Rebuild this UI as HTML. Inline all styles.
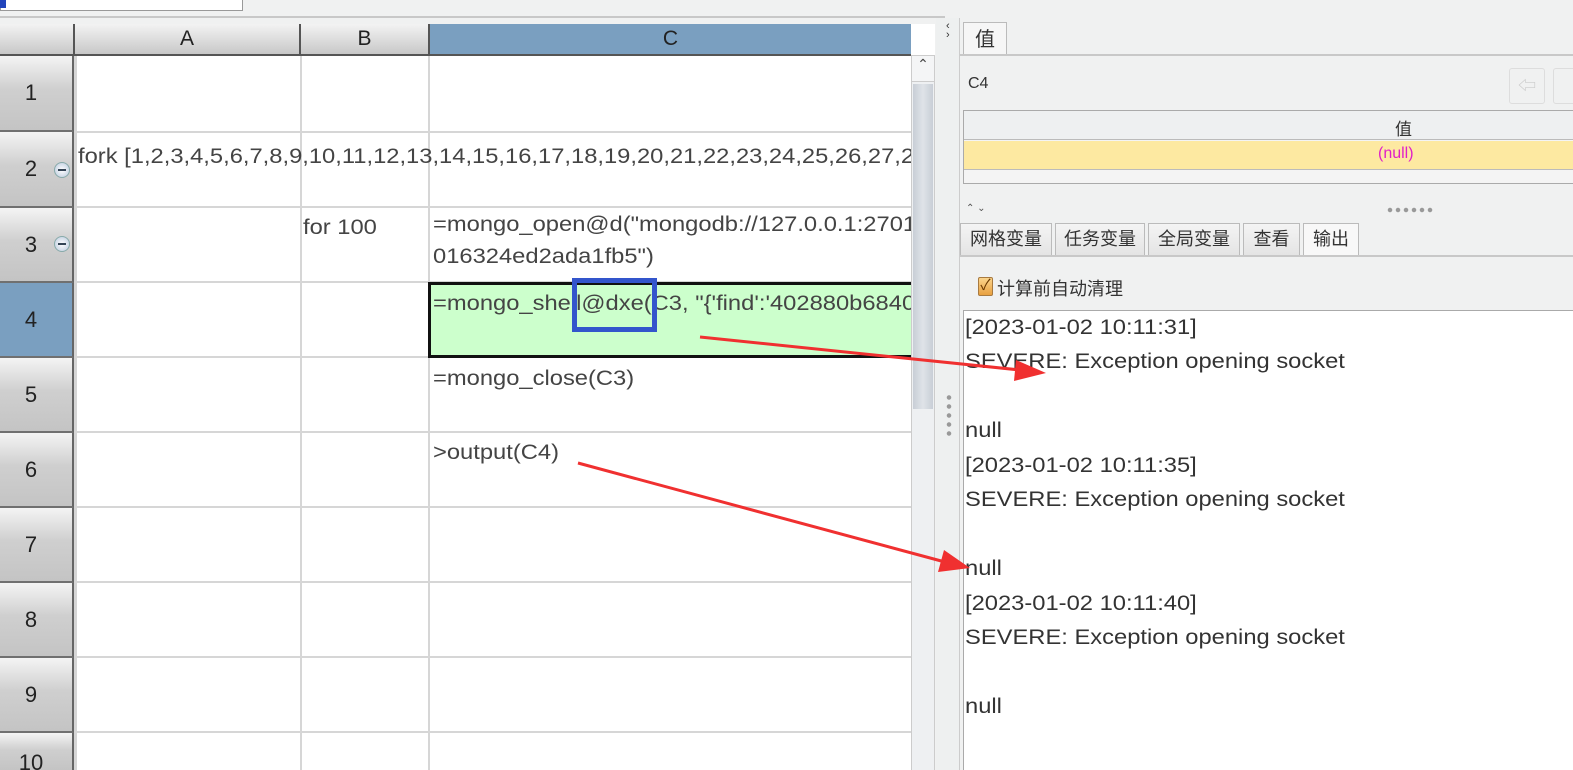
<!DOCTYPE html>
<html style="width:1573px;height:770px;overflow:hidden"><head><meta charset="utf-8"><style>
*{margin:0;padding:0;box-sizing:border-box}
body{width:1573px;height:770px;overflow:hidden;background:#f0f1f1;font-family:"Liberation Sans","Noto Sans CJK SC",sans-serif;position:relative}
.a{position:absolute}
.rh{position:absolute;left:0;width:74px;background:linear-gradient(#f4f4f4,#cfcfcf 45%,#c4c4c4);border-bottom:2px solid #707070;border-right:2px solid #666;font-size:22px;color:#222}
.rh span{position:absolute;left:0;width:62px;text-align:center;top:50%;transform:translateY(-50%)}
.ch{position:absolute;top:24px;height:32px;background:linear-gradient(#f3f3f3,#c8c8c8);border-right:2px solid #555;border-bottom:2px solid #555;font-size:21px;color:#222;text-align:center;line-height:30px}
.hl{position:absolute;left:74px;width:837px;height:2px;background:#d6d6d6}
.vl{position:absolute;top:56px;height:714px;width:2px;background:#d6d6d6}
.t{position:absolute;font-size:21px;color:#444;white-space:nowrap;transform:scaleX(1.13);transform-origin:0 0}
.clip{position:absolute;overflow:hidden}
.btn{position:absolute;left:54px;width:16px;height:16px;border-radius:50%;background:radial-gradient(#fff,#b8c8dc);border:1px solid #8aa;}
.btn:after{content:"";position:absolute;left:3px;top:6px;width:8px;height:2px;background:#345}
.out{position:absolute;left:965px;font-size:21px;color:#333;white-space:nowrap;transform:scaleX(1.13);transform-origin:0 0}
.tab{position:absolute;top:223px;height:32px;border:1px solid #bbb;border-bottom:none;background:linear-gradient(#f4f4f4,#e4e4e4);font-size:18px;color:#333;text-align:center;line-height:30px}
</style></head><body>
<div class="a" style="left:0;top:0;width:243px;height:11px;background:#fff;border:1px solid #999;border-top:none"></div>
<div class="a" style="left:0;top:0;width:6px;height:8px;background:#2244bb"></div>
<div class="a" style="left:0;top:16px;width:945px;height:2px;background:#c8c8c8"></div>
<div class="a" style="left:74px;top:56px;width:837px;height:714px;background:#fff"></div>
<div class="ch" style="left:0;width:75px"></div>
<div class="ch" style="left:75px;width:226px">A</div>
<div class="ch" style="left:301px;width:129px">B</div>
<div class="ch" style="left:430px;width:481px;background:#7a9fc0;border-right:none">C</div>
<div class="a" style="left:911px;top:24px;width:24px;height:32px;background:#fff;border-bottom:1px solid #ccc"></div>
<div class="rh" style="top:56px;height:76px"><span>1</span></div>
<div class="rh" style="top:132px;height:76px"><span>2</span></div>
<div class="rh" style="top:208px;height:75px"><span>3</span></div>
<div class="rh" style="top:283px;height:75px;background:#7a9fc0"><span>4</span></div>
<div class="rh" style="top:358px;height:75px"><span>5</span></div>
<div class="rh" style="top:433px;height:75px"><span>6</span></div>
<div class="rh" style="top:508px;height:75px"><span>7</span></div>
<div class="rh" style="top:583px;height:75px"><span>8</span></div>
<div class="rh" style="top:658px;height:75px"><span>9</span></div>
<div class="rh" style="top:733px;height:37px;border-bottom:none"><span style="top:30px">10</span></div>
<div class="btn" style="top:162px"></div>
<div class="btn" style="top:236px"></div>
<div class="hl" style="top:131px"></div><div class="hl" style="top:206px"></div><div class="hl" style="top:281px"></div>
<div class="hl" style="top:356px"></div><div class="hl" style="top:431px"></div><div class="hl" style="top:506px"></div>
<div class="hl" style="top:581px"></div><div class="hl" style="top:656px"></div><div class="hl" style="top:731px"></div>
<div class="vl" style="left:74px;width:3px"></div><div class="vl" style="left:300px"></div><div class="vl" style="left:428px"></div>
<div class="a" style="left:428px;top:282px;width:485px;height:76px;background:#ccffcc;border:3px solid #111;border-right:none"></div>
<div class="clip" style="left:78px;top:140px;width:833px;height:40px"><div class="t" style="left:0;top:5px">fork [1,2,3,4,5,6,7,8,9,10,11,12,13,14,15,16,17,18,19,20,21,22,23,24,25,26,27,28</div></div>
<div class="t" style="left:303px;top:216px">for 100</div>
<div class="clip" style="left:433px;top:210px;width:478px;height:34px"><div class="t" style="left:0;top:3px">=mongo_open@d("mongodb://127.0.0.1:27017</div></div>
<div class="t" style="left:433px;top:245px">016324ed2ada1fb5")</div>
<div class="clip" style="left:433px;top:288px;width:478px;height:34px"><div class="t" style="left:0;top:4px">=mongo_shell@dxe(C3, "{'find':'402880b6840</div></div>
<div class="t" style="left:433px;top:367px">=mongo_close(C3)</div>
<div class="t" style="left:433px;top:441px">&gt;output(C4)</div>
<div class="a" style="left:572px;top:278px;width:85px;height:54px;border:5px solid #3355cc"></div>
<div class="a" style="left:911px;top:56px;width:24px;height:714px;background:#eef0f2;border-left:1px solid #ccc;border-right:1px solid #ccc"></div>
<div class="a" style="left:912px;top:56px;width:22px;height:26px;background:#f4f5f6;border-bottom:1px solid #ccc;font-size:14px;text-align:center;color:#444">&#8963;</div>
<div class="a" style="left:913px;top:84px;width:20px;height:325px;background:linear-gradient(90deg,#c8ced6,#dfe3e8,#c8ced6)"></div>
<div class="a" style="left:936px;top:18px;width:24px;height:752px;background:#eef0f0;border-right:1px solid #ccc"></div>
<div class="a" style="left:946px;top:393px;width:6px;height:46px;background:radial-gradient(circle,#999 2px,transparent 2.5px) 0 0/6px 9px"></div>
<div class="a" style="left:946px;top:22px;font-size:11px;color:#333;line-height:9px">‹<br>›</div>
<div class="a" style="left:963px;top:22px;width:44px;height:33px;background:#f6f6f6;border:1px solid #bbb;border-bottom:none;font-size:20px;text-align:center;line-height:34px;color:#333">值</div>
<div class="a" style="left:960px;top:54px;width:613px;height:2px;background:#c8c8c8"></div>
<div class="a" style="left:968px;top:75px;font-size:16px;color:#333">C4</div>
<div class="a" style="left:1509px;top:68px;width:36px;height:36px;border:1px solid #ddd;border-radius:3px;color:#ccc;text-align:center;line-height:34px;font-size:18px">⇦</div>
<div class="a" style="left:1553px;top:68px;width:30px;height:36px;border:1px solid #ddd;border-radius:3px"></div>
<div class="a" style="left:963px;top:110px;width:620px;height:74px;border:1px solid #aaa;background:#f4f4f4"></div>
<div class="a" style="left:964px;top:111px;width:620px;height:29px;background:#eef0f1;border-bottom:1px solid #bbb;font-size:17px;color:#333"><span style="position:absolute;left:431px;top:4px">值</span></div>
<div class="a" style="left:964px;top:141px;width:620px;height:29px;background:#fde9a1;border-bottom:1px solid #bbb;font-size:16px;color:#e020c8"><span style="position:absolute;left:414px;top:4px">(null)</span></div>
<div class="a" style="left:966px;top:203px;font-size:10px;color:#555">⌃ ⌄</div>
<div class="a" style="left:1386px;top:207px;width:48px;height:6px;background:radial-gradient(circle,#999 2px,transparent 2.5px) 0 0/8px 6px"></div>
<div class="tab" style="left:960px;width:92px">网格变量</div>
<div class="tab" style="left:1055px;width:90px">任务变量</div>
<div class="tab" style="left:1148px;width:92px">全局变量</div>
<div class="tab" style="left:1243px;width:57px">查看</div>
<div class="tab" style="left:1303px;width:56px;background:#f8f8f8;height:33px">输出</div>
<div class="a" style="left:960px;top:255px;width:613px;height:2px;background:#c8c8c8"></div>
<div class="a" style="left:978px;top:277px;width:15px;height:19px;background:linear-gradient(#fbd48c,#e8a040);border:1px solid #a87a40;border-radius:2px;color:#6a3800;font-size:15px;line-height:15px;text-align:center">✓</div>
<div class="a" style="left:997px;top:275px;font-size:18px;color:#333">计算前自动清理</div>
<div class="a" style="left:963px;top:310px;width:620px;height:470px;background:#fff;border:1px solid #aaa"></div>
<div class="out" style="top:316px">[2023-01-02 10:11:31]</div>
<div class="out" style="top:350px">SEVERE: Exception opening socket</div>
<div class="out" style="top:419px">null</div>
<div class="out" style="top:454px">[2023-01-02 10:11:35]</div>
<div class="out" style="top:488px">SEVERE: Exception opening socket</div>
<div class="out" style="top:557px">null</div>
<div class="out" style="top:592px">[2023-01-02 10:11:40]</div>
<div class="out" style="top:626px">SEVERE: Exception opening socket</div>
<div class="out" style="top:695px">null</div>
<svg class="a" style="left:0;top:0" width="1573" height="770">
<line x1="700" y1="337" x2="1020" y2="370" stroke="#f03030" stroke-width="3"/>
<polygon points="1046,373 1016,360 1014,381" fill="#f03030"/>
<line x1="578" y1="463" x2="945" y2="562" stroke="#f03030" stroke-width="3"/>
<polygon points="970,568 944,550 938,572" fill="#f03030"/>
</svg>
</body></html>
